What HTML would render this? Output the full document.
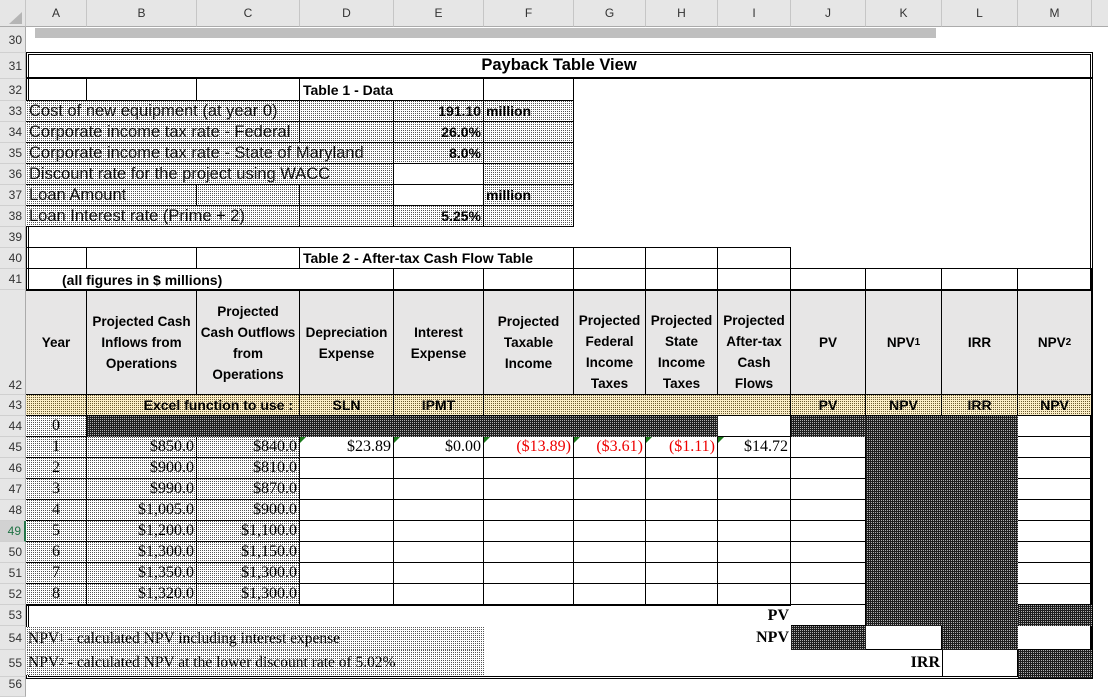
<!DOCTYPE html>
<html><head><meta charset="utf-8"><style>
*{margin:0;padding:0;box-sizing:border-box}
body{width:1108px;height:689px;background:#fff;position:relative;overflow:hidden;font-family:"Liberation Sans",sans-serif}
.c{position:absolute;display:flex;align-items:center;white-space:nowrap;overflow:visible}
.b{border-right:1px solid #000;border-bottom:1px solid #000}
.bt{border-top:1px solid #000}
.lp{background:conic-gradient(#555 0 25%,#fff 0) 0 0/2px 2px}
.dp{background:conic-gradient(#b0b0b0 0 25%,#1e1e1e 0) 0 0/2px 2px}
.bp{background:conic-gradient(#6a5a30 0 25%,#fbeec8 0) 0 0/2px 2px}
.gh{background:#e7e6e6}
.ar{font-size:16.5px;padding-left:3px;color:#111}
.bd{font-weight:bold;font-size:14px}
.r{justify-content:flex-end;padding-right:2px}
.ctr{justify-content:center;text-align:center}
.sf{font-family:"Liberation Serif",serif;font-size:15px}
.red{color:#e00}
.hd{font-weight:bold;font-size:13.5px;line-height:21px;justify-content:center;text-align:center;white-space:normal}
.ch{position:absolute;top:0;height:27px;background:#e6e6e6;border-right:1px solid #c6c6c6;border-bottom:1px solid #ababab;font-size:12px;color:#333;display:flex;align-items:center;justify-content:center}
.rh{position:absolute;left:0;width:26px;background:#e6e6e6;border-bottom:1px solid #d0d0d0;border-right:1px solid #ababab;font-size:12px;color:#333;display:flex;align-items:center;justify-content:flex-end;padding-right:3px}
.tri{position:absolute;width:0;height:0;border-top:6px solid #1a7a1a;border-right:6px solid transparent}
.n{font-size:16px}
</style></head><body>
<div class="ch" style="left:0;width:26px"></div>
<div style="position:absolute;left:9px;top:12px;width:0;height:0;border-left:13px solid transparent;border-bottom:12px solid #b5b5b5"></div>
<div class="ch" style="left:26px;width:61px">A</div>
<div class="ch" style="left:87px;width:110px">B</div>
<div class="ch" style="left:197px;width:103px">C</div>
<div class="ch" style="left:300px;width:94px">D</div>
<div class="ch" style="left:394px;width:90px">E</div>
<div class="ch" style="left:484px;width:90px">F</div>
<div class="ch" style="left:574px;width:72px">G</div>
<div class="ch" style="left:646px;width:72px">H</div>
<div class="ch" style="left:718px;width:73px">I</div>
<div class="ch" style="left:791px;width:75px">J</div>
<div class="ch" style="left:866px;width:76px">K</div>
<div class="ch" style="left:942px;width:76px">L</div>
<div class="ch" style="left:1018px;width:74px">M</div>
<div class="ch" style="left:1092px;width:16px;border-right:none"></div>
<div class="rh" style="top:27px;height:26px">30</div>
<div class="rh" style="top:53px;height:26px">31</div>
<div class="rh" style="top:79px;height:22px">32</div>
<div class="rh" style="top:101px;height:21px">33</div>
<div class="rh" style="top:122px;height:21px">34</div>
<div class="rh" style="top:143px;height:21px">35</div>
<div class="rh" style="top:164px;height:21px">36</div>
<div class="rh" style="top:185px;height:21px">37</div>
<div class="rh" style="top:206px;height:21px">38</div>
<div class="rh" style="top:227px;height:21px">39</div>
<div class="rh" style="top:248px;height:21px">40</div>
<div class="rh" style="top:269px;height:21px">41</div>
<div class="rh" style="top:290px;height:105px;align-items:flex-end;padding-bottom:2px">42</div>
<div class="rh" style="top:395px;height:21px">43</div>
<div class="rh" style="top:416px;height:21px">44</div>
<div class="rh" style="top:437px;height:21px">45</div>
<div class="rh" style="top:458px;height:21px">46</div>
<div class="rh" style="top:479px;height:21px">47</div>
<div class="rh" style="top:500px;height:21px">48</div>
<div class="rh" style="top:521px;height:21px;background:#d2d2d2;color:#217346;border-right:2px solid #217346">49</div>
<div class="rh" style="top:542px;height:21px">50</div>
<div class="rh" style="top:563px;height:21px">51</div>
<div class="rh" style="top:584px;height:21px">52</div>
<div class="rh" style="top:605px;height:21px">53</div>
<div class="rh" style="top:626px;height:24px">54</div>
<div class="rh" style="top:650px;height:27px">55</div>
<div class="rh" style="top:677px;height:20px;align-items:flex-start">56</div>
<div style="position:absolute;left:35px;top:28px;width:901px;height:10px;background:#bfbfbf"></div>

<div style="position:absolute;left:26px;top:52px;width:1067px;height:627px;border:3px double #000"></div>
<div class="c ctr" style="left:26px;top:53px;width:1066px;height:26px;font-weight:bold;font-size:16.5px;border-bottom:2px solid #000">Payback Table View</div>

<div class="c b" style="left:26px;top:79px;width:61px;height:22px"></div>
<div class="c b" style="left:87px;top:79px;width:110px;height:22px"></div>
<div class="c b" style="left:197px;top:79px;width:103px;height:22px"></div>
<div class="c b bd" style="left:300px;top:79px;width:184px;height:22px;padding-left:3px">Table 1 - Data</div>
<div class="c b" style="left:484px;top:79px;width:90px;height:22px"></div>

<div class="c b lp ar" style="left:26px;top:101px;width:274px;height:21px">Cost of new equipment (at year 0)</div>
<div class="c b lp" style="left:300px;top:101px;width:94px;height:21px"></div>
<div class="c b lp bd r" style="left:394px;top:101px;width:90px;height:21px">191.10</div>
<div class="c b lp bd" style="left:484px;top:101px;width:90px;height:21px;padding-left:2px">million</div>

<div class="c b lp ar" style="left:26px;top:122px;width:274px;height:21px">Corporate income tax rate - Federal</div>
<div class="c b lp" style="left:300px;top:122px;width:94px;height:21px"></div>
<div class="c b lp bd r" style="left:394px;top:122px;width:90px;height:21px">26.0%</div>
<div class="c b lp" style="left:484px;top:122px;width:90px;height:21px"></div>

<div class="c b lp ar" style="left:26px;top:143px;width:368px;height:21px">Corporate income tax rate - State of Maryland</div>
<div class="c b lp bd r" style="left:394px;top:143px;width:90px;height:21px">8.0%</div>
<div class="c b lp" style="left:484px;top:143px;width:90px;height:21px"></div>

<div class="c b lp ar" style="left:26px;top:164px;width:368px;height:21px">Discount rate for the project using WACC</div>
<div class="c b" style="left:394px;top:164px;width:90px;height:21px"></div>
<div class="c b lp" style="left:484px;top:164px;width:90px;height:21px"></div>

<div class="c b lp ar" style="left:26px;top:185px;width:171px;height:21px">Loan Amount</div>
<div class="c b lp" style="left:197px;top:185px;width:103px;height:21px"></div>
<div class="c b lp" style="left:300px;top:185px;width:94px;height:21px"></div>
<div class="c b" style="left:394px;top:185px;width:90px;height:21px"></div>
<div class="c b lp bd" style="left:484px;top:185px;width:90px;height:21px;padding-left:2px">million</div>

<div class="c b lp ar" style="left:26px;top:206px;width:274px;height:21px">Loan Interest rate (Prime + 2)</div>
<div class="c b lp" style="left:300px;top:206px;width:94px;height:21px"></div>
<div class="c b lp bd r" style="left:394px;top:206px;width:90px;height:21px">5.25%</div>
<div class="c b lp" style="left:484px;top:206px;width:90px;height:21px"></div>

<div class="c b bt" style="left:26px;top:247px;width:61px;height:22px"></div>
<div class="c b bt" style="left:87px;top:247px;width:110px;height:22px"></div>
<div class="c b bt" style="left:197px;top:247px;width:103px;height:22px"></div>
<div class="c b bt bd" style="left:300px;top:247px;width:274px;height:22px;padding-left:3px">Table 2 - After-tax Cash Flow Table</div>
<div class="c b bt" style="left:574px;top:247px;width:72px;height:22px"></div>
<div class="c b bt" style="left:646px;top:247px;width:72px;height:22px"></div>
<div class="c b bt" style="left:718px;top:247px;width:73px;height:22px"></div>
<div class="c bd" style="left:62px;top:269px;width:220px;height:21px">(all figures in $ millions)</div>
<div class="c b" style="left:300px;top:269px;width:94px;height:21px"></div>
<div class="c b" style="left:394px;top:269px;width:90px;height:21px"></div>
<div class="c b" style="left:484px;top:269px;width:90px;height:21px"></div>
<div class="c b" style="left:574px;top:269px;width:72px;height:21px"></div>
<div class="c b" style="left:646px;top:269px;width:72px;height:21px"></div>
<div class="c b" style="left:718px;top:269px;width:73px;height:21px"></div>
<div class="c b bt" style="left:791px;top:268px;width:75px;height:22px"></div>
<div class="c b bt" style="left:866px;top:268px;width:76px;height:22px"></div>
<div class="c b bt" style="left:942px;top:268px;width:76px;height:22px"></div>
<div class="c b bt" style="left:1018px;top:268px;width:74px;height:22px"></div>
<div style="position:absolute;left:26px;top:289px;width:1066px;height:2px;background:#000"></div>

<div class="c b gh hd" style="left:26px;top:291px;width:61px;height:104px">Year</div>
<div class="c b gh hd" style="left:87px;top:291px;width:110px;height:104px">Projected Cash<br>Inflows from<br>Operations</div>
<div class="c b gh hd" style="left:197px;top:291px;width:103px;height:104px">Projected<br>Cash Outflows<br>from<br>Operations</div>
<div class="c b gh hd" style="left:300px;top:291px;width:94px;height:104px">Depreciation<br>Expense</div>
<div class="c b gh hd" style="left:394px;top:291px;width:90px;height:104px">Interest<br>Expense</div>
<div class="c b gh hd" style="left:484px;top:291px;width:90px;height:104px">Projected<br>Taxable<br>Income</div>
<div class="c b gh hd" style="left:574px;top:291px;width:72px;height:104px;align-items:flex-end">Projected<br>Federal<br>Income<br>Taxes</div>
<div class="c b gh hd" style="left:646px;top:291px;width:72px;height:104px;align-items:flex-end">Projected<br>State<br>Income<br>Taxes</div>
<div class="c b gh hd" style="left:718px;top:291px;width:73px;height:104px;align-items:flex-end">Projected<br>After-tax<br>Cash<br>Flows</div>
<div class="c b gh hd" style="left:791px;top:291px;width:75px;height:104px">PV</div>
<div class="c b gh hd" style="left:866px;top:291px;width:76px;height:104px">NPV<sub style="font-size:10px">1</sub></div>
<div class="c b gh hd" style="left:942px;top:291px;width:76px;height:104px">IRR</div>
<div class="c b gh hd" style="left:1018px;top:291px;width:74px;height:104px">NPV<sub style="font-size:10px">2</sub></div>

<div class="c b bp" style="left:26px;top:395px;width:61px;height:21px"></div>
<div class="c b bp bd r" style="left:87px;top:395px;width:213px;height:21px;padding-right:6px">Excel function to use :</div>
<div class="c b bp bd ctr" style="left:300px;top:395px;width:94px;height:21px">SLN</div>
<div class="c b bp bd ctr" style="left:394px;top:395px;width:90px;height:21px">IPMT</div>
<div class="c bp" style="left:484px;top:395px;width:307px;height:21px;border-bottom:1px solid #000;border-right:1px solid #000"></div>
<div class="c b bp bd ctr" style="left:791px;top:395px;width:75px;height:21px">PV</div>
<div class="c b bp bd ctr" style="left:866px;top:395px;width:76px;height:21px">NPV</div>
<div class="c b bp bd ctr" style="left:942px;top:395px;width:76px;height:21px">IRR</div>
<div class="c b bp bd ctr" style="left:1018px;top:395px;width:74px;height:21px">NPV</div>

<div class="c b lp sf ctr n" style="left:26px;top:416px;width:61px;height:21px">0</div>
<div class="c dp" style="left:87px;top:416px;width:631px;height:21px"></div>
<div class="c b" style="left:718px;top:416px;width:73px;height:21px"></div>
<div class="c dp" style="left:791px;top:416px;width:75px;height:21px"></div>
<div class="c dp" style="left:866px;top:416px;width:152px;height:210px"></div>
<div class="c dp" style="left:942px;top:626px;width:76px;height:24px"></div>
<div class="c b" style="left:1018px;top:416px;width:74px;height:21px"></div>

<div class="c b lp sf ctr n" style="left:26px;top:437px;width:61px;height:21px">1</div>
<div class="c b lp sf r n" style="left:87px;top:437px;width:110px;height:21px">$850.0</div>
<div class="c b lp sf r n" style="left:197px;top:437px;width:103px;height:21px">$840.0</div>
<div class="c b sf r" style="left:300px;top:437px;width:94px;height:21px;font-size:16px">$23.89</div>
<div class="c b sf r" style="left:394px;top:437px;width:90px;height:21px;font-size:16px">$0.00</div>
<div class="c b sf r red" style="left:484px;top:437px;width:90px;height:21px;font-size:16px">($13.89)</div>
<div class="c b sf r red" style="left:574px;top:437px;width:72px;height:21px;font-size:16px">($3.61)</div>
<div class="c b sf r red" style="left:646px;top:437px;width:72px;height:21px;font-size:16px">($1.11)</div>
<div class="c b sf r" style="left:718px;top:437px;width:73px;height:21px;font-size:16px">$14.72</div>
<div class="c b" style="left:791px;top:437px;width:75px;height:21px"></div>
<div class="c b" style="left:1018px;top:437px;width:74px;height:21px"></div>
<div class="tri" style="left:300px;top:437px"></div>
<div class="tri" style="left:394px;top:437px"></div>
<div class="tri" style="left:484px;top:437px"></div>
<div class="tri" style="left:574px;top:437px"></div>
<div class="tri" style="left:646px;top:437px"></div>
<div class="tri" style="left:718px;top:437px"></div>

<div class="c b lp sf ctr n" style="left:26px;top:458px;width:61px;height:21px">2</div>
<div class="c b lp sf r n" style="left:87px;top:458px;width:110px;height:21px">$900.0</div>
<div class="c b lp sf r n" style="left:197px;top:458px;width:103px;height:21px">$810.0</div>
<div class="c b lp sf ctr n" style="left:26px;top:479px;width:61px;height:21px">3</div>
<div class="c b lp sf r n" style="left:87px;top:479px;width:110px;height:21px">$990.0</div>
<div class="c b lp sf r n" style="left:197px;top:479px;width:103px;height:21px">$870.0</div>
<div class="c b lp sf ctr n" style="left:26px;top:500px;width:61px;height:21px">4</div>
<div class="c b lp sf r n" style="left:87px;top:500px;width:110px;height:21px">$1,005.0</div>
<div class="c b lp sf r n" style="left:197px;top:500px;width:103px;height:21px">$900.0</div>
<div class="c b lp sf ctr n" style="left:26px;top:521px;width:61px;height:21px">5</div>
<div class="c b lp sf r n" style="left:87px;top:521px;width:110px;height:21px">$1,200.0</div>
<div class="c b lp sf r n" style="left:197px;top:521px;width:103px;height:21px">$1,100.0</div>
<div class="c b lp sf ctr n" style="left:26px;top:542px;width:61px;height:21px">6</div>
<div class="c b lp sf r n" style="left:87px;top:542px;width:110px;height:21px">$1,300.0</div>
<div class="c b lp sf r n" style="left:197px;top:542px;width:103px;height:21px">$1,150.0</div>
<div class="c b lp sf ctr n" style="left:26px;top:563px;width:61px;height:21px">7</div>
<div class="c b lp sf r n" style="left:87px;top:563px;width:110px;height:21px">$1,350.0</div>
<div class="c b lp sf r n" style="left:197px;top:563px;width:103px;height:21px">$1,300.0</div>
<div class="c b lp sf ctr n" style="left:26px;top:584px;width:61px;height:21px">8</div>
<div class="c b lp sf r n" style="left:87px;top:584px;width:110px;height:21px">$1,320.0</div>
<div class="c b lp sf r n" style="left:197px;top:584px;width:103px;height:21px">$1,300.0</div>

<div style="position:absolute;left:300px;top:458px;width:491px;height:147px;
background:
repeating-linear-gradient(to bottom,transparent 0 20px,#000 20px 21px),
linear-gradient(#000,#000) 93px 0/1px 100% no-repeat,
linear-gradient(#000,#000) 183px 0/1px 100% no-repeat,
linear-gradient(#000,#000) 273px 0/1px 100% no-repeat,
linear-gradient(#000,#000) 345px 0/1px 100% no-repeat,
linear-gradient(#000,#000) 417px 0/1px 100% no-repeat,
linear-gradient(#000,#000) 490px 0/1px 100% no-repeat"></div>
<div style="position:absolute;left:791px;top:458px;width:75px;height:147px;background:repeating-linear-gradient(to bottom,transparent 0 20px,#000 20px 21px);border-right:1px solid #000"></div>
<div style="position:absolute;left:1018px;top:458px;width:74px;height:147px;background:repeating-linear-gradient(to bottom,transparent 0 20px,#000 20px 21px);border-right:1px solid #000"></div>

<div style="position:absolute;left:26px;top:604px;width:765px;height:2px;background:#000"></div>
<div class="c sf r" style="left:718px;top:606px;width:73px;height:20px;font-weight:bold;font-size:16px">PV</div>
<div class="c b" style="left:791px;top:605px;width:75px;height:21px"></div>
<div class="c dp" style="left:1018px;top:605px;width:74px;height:21px"></div>

<div class="c lp sf" style="left:26px;top:627px;width:458px;height:23px;font-size:15.5px;padding-left:2px">NPV<sub style="font-size:10px">1</sub>&nbsp;- calculated NPV including interest expense</div>
<div class="c sf r" style="left:718px;top:626px;width:73px;height:24px;font-weight:bold;font-size:16px">NPV</div>
<div class="c dp" style="left:791px;top:626px;width:75px;height:24px"></div>
<div class="c b" style="left:866px;top:626px;width:76px;height:24px"></div>
<div class="c b" style="left:1018px;top:626px;width:74px;height:24px"></div>

<div class="c lp sf" style="left:26px;top:650px;width:458px;height:25px;font-size:15.5px;padding-left:2px">NPV<sub style="font-size:10px">2</sub>&nbsp;- calculated NPV at the lower discount rate of 5.02%</div>
<div class="c sf r" style="left:866px;top:650px;width:76px;height:25px;font-weight:bold;font-size:16px">IRR</div>
<div class="c" style="left:942px;top:650px;width:76px;height:26px;border-left:1px solid #000;border-right:1px solid #000"></div>
<div class="c dp" style="left:1018px;top:650px;width:74px;height:28px"></div>
</body></html>
